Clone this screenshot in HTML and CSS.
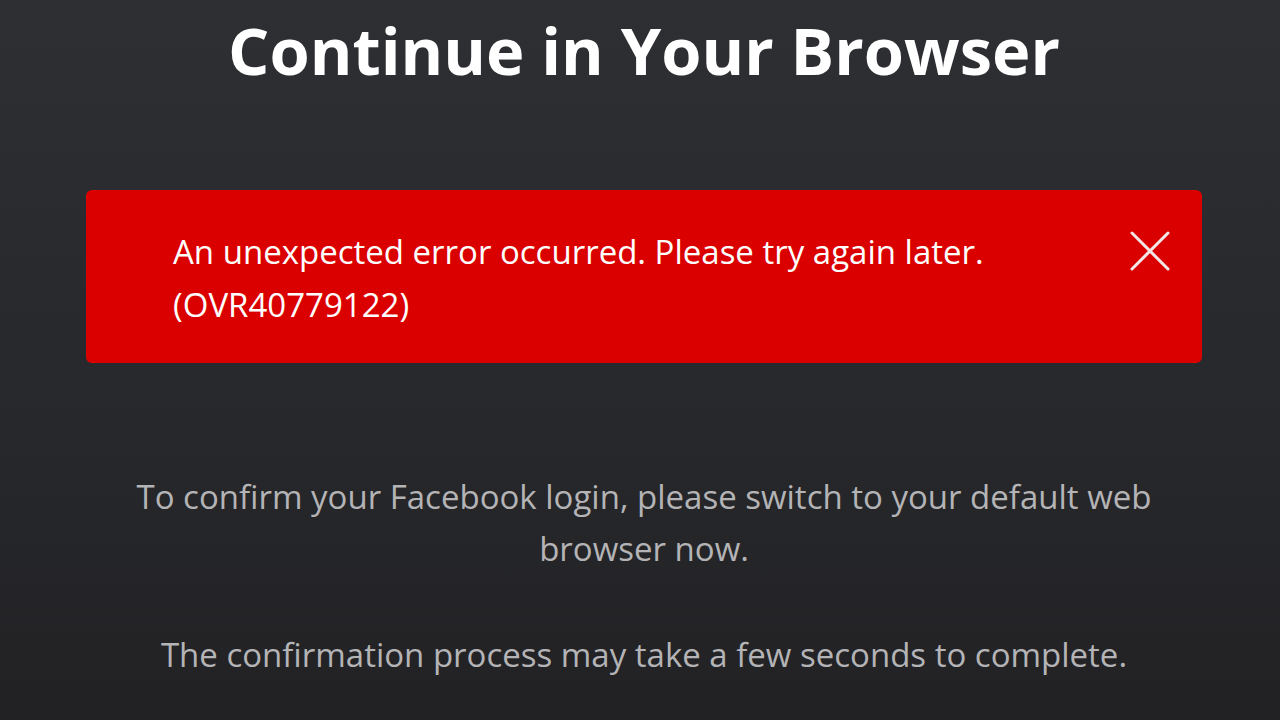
FILE: index.html
```html
<!DOCTYPE html>
<html lang="en">
<head>
<meta charset="utf-8">
<title>Continue in Your Browser</title>
<link rel="stylesheet" href="styles.css">
</head>
<body>
<main class="page">
  <h1 class="title">Continue in Your Browser</h1>
  <div class="alert" role="alert">
    <p class="alert-text">An unexpected error occurred. Please try again later. (OVR40779122)</p>
    <button class="alert-close" aria-label="Close">
      <svg viewBox="0 0 40 40" width="40" height="40"><path d="M2 2 L38 38 M38 2 L2 38" stroke="#f3e6e6" stroke-width="3" stroke-linecap="round" fill="none"/></svg>
    </button>
  </div>
  <p class="info">To confirm your Facebook login, please switch to your default web browser now.</p>
  <p class="info info-last">The confirmation process may take a few seconds to complete.</p>
</main>
</body>
</html>
```
FILE: styles.css
```css
html, body {
  margin: 0;
  height: 100%;
}
body {
  background: linear-gradient(180deg, #2e2f32 0%, #28292c 50%, #222225 100%);
  font-family: "Open Sans", "Noto Sans", sans-serif;
  overflow: hidden;
}
.page {
  width: 1116px;
  margin-left: 86px;
  display: flex;
  flex-direction: column;
}
.title {
  margin: 10px 0 0;
  text-align: center;
  color: #ffffff;
  font-weight: 700;
  font-size: 65px;
  line-height: 80px;
}
.alert {
  margin-top: 100px;
  height: 173px;
  box-sizing: border-box;
  background: #db0000;
  border-radius: 6px;
  display: flex;
  align-items: flex-start;
  padding: 35px 32px 0 87px;
}
.alert-text {
  margin: 0;
  flex: 1;
  color: #ffffff;
  font-size: 33px;
  line-height: 53px;
  max-width: 870px;
}
.alert-close {
  margin-left: auto;
  margin-top: 6px;
  background: none;
  border: 0;
  padding: 0;
  width: 40px;
  height: 40px;
}
.alert-close svg { display: block; }
.info {
  margin: 108px 0 0;
  text-align: center;
  color: #b4b4b6;
  font-size: 33px;
  line-height: 52px;
}
.info-last {
  margin-top: 54px;
}
```
